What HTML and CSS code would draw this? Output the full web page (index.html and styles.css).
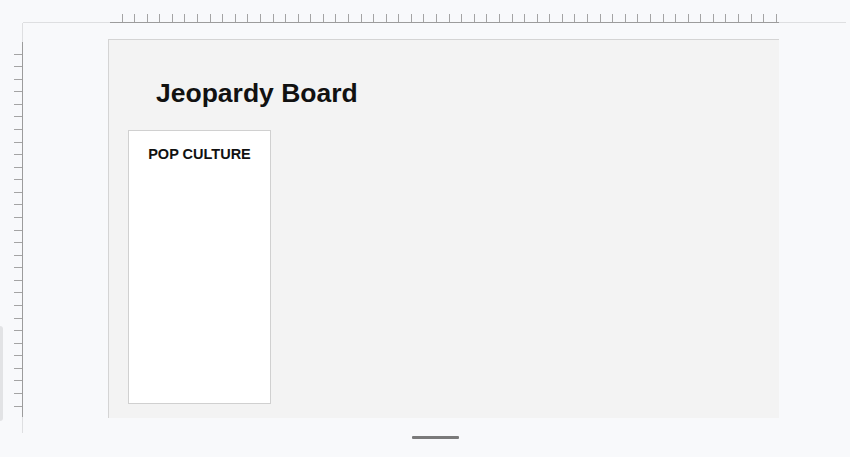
FILE: index.html
```html
<!DOCTYPE html>
<html lang="en">
<head>
<meta charset="utf-8">
<title>Jeopardy Board</title>
<link rel="stylesheet" href="styles.css">
</head>
<body>
  <div class="edge-tab"></div>
  <div class="stage">
    <div class="corner"></div>
    <div class="hruler-row"><div class="hruler"></div></div>
    <div class="vruler-col"><div class="vruler"></div></div>
    <div class="frame-main">
      <div class="panel">
        <h1 class="board-title">Jeopardy Board</h1>
        <div class="category-card">
          <h2 class="category-title">POP CULTURE</h2>
        </div>
      </div>
    </div>
    <div class="corner"></div>
    <div class="bottom-row"><div class="resize-handle"></div></div>
  </div>
</body>
</html>
```

FILE: styles.css
```css
html, body {
  margin: 0;
  padding: 0;
}

body {
  width: 850px;
  height: 457px;
  overflow: hidden;
  background: #f8f9fb;
  font-family: "Liberation Sans", Arial, sans-serif;
  display: flex;
  align-items: flex-start;
}

.edge-tab {
  width: 3px;
  height: 95px;
  margin-top: 326px;
  background: #e2e3e5;
  border-radius: 0 3px 3px 0;
  flex: none;
}

.stage {
  margin-left: 11px;
  padding-top: 14px;
  display: grid;
  grid-template-columns: 9px 823px;
  grid-template-rows: 9px 410px auto;
}

.corner {
  width: 9px;
}

.hruler-row {
  box-sizing: border-box;
  height: 9px;
  border-bottom: 1px solid #dedfe1;
}

.hruler {
  box-sizing: border-box;
  margin-left: 87px;
  width: 669px;
  height: 9px;
  border-bottom: 1px solid #9c9c9c;
  background: repeating-linear-gradient(to right, transparent 0 11.58px, #a4a4a4 11.58px 12.58px);
}

.vruler-col {
  box-sizing: border-box;
  width: 9px;
  border-right: 1px solid #dedfe1;
}

.vruler {
  box-sizing: border-box;
  width: 9px;
  height: 375px;
  margin-top: 19px;
  border-right: 1px solid #9c9c9c;
  background: repeating-linear-gradient(to bottom, transparent 0 11.57px, #a4a4a4 11.57px 12.57px);
}

.frame-main {
  padding: 16px 0 0 85px;
}

.panel {
  box-sizing: border-box;
  width: 671px;
  height: 379px;
  background: #f3f3f3;
  border-top: 1px solid #d4d4d4;
  border-left: 1px solid #d4d4d4;
  padding: 0 19px;
}

.board-title {
  margin: 37px 0 0 28px;
  font-size: 26.5px;
  line-height: 32px;
  font-weight: bold;
  color: #111;
}

.category-card {
  box-sizing: border-box;
  width: 143px;
  height: 274px;
  margin-top: 21px;
  background: #fff;
  border: 1px solid #d0d0d0;
  padding-top: 15px;
}

.category-title {
  margin: 0;
  font-size: 14.5px;
  line-height: 17px;
  font-weight: bold;
  text-align: center;
  color: #111;
}

.bottom-row {
  padding: 3px 0 0 389px;
}

.resize-handle {
  width: 47px;
  height: 2.5px;
  background: #7a7a7a;
  border-radius: 1px;
}
```
